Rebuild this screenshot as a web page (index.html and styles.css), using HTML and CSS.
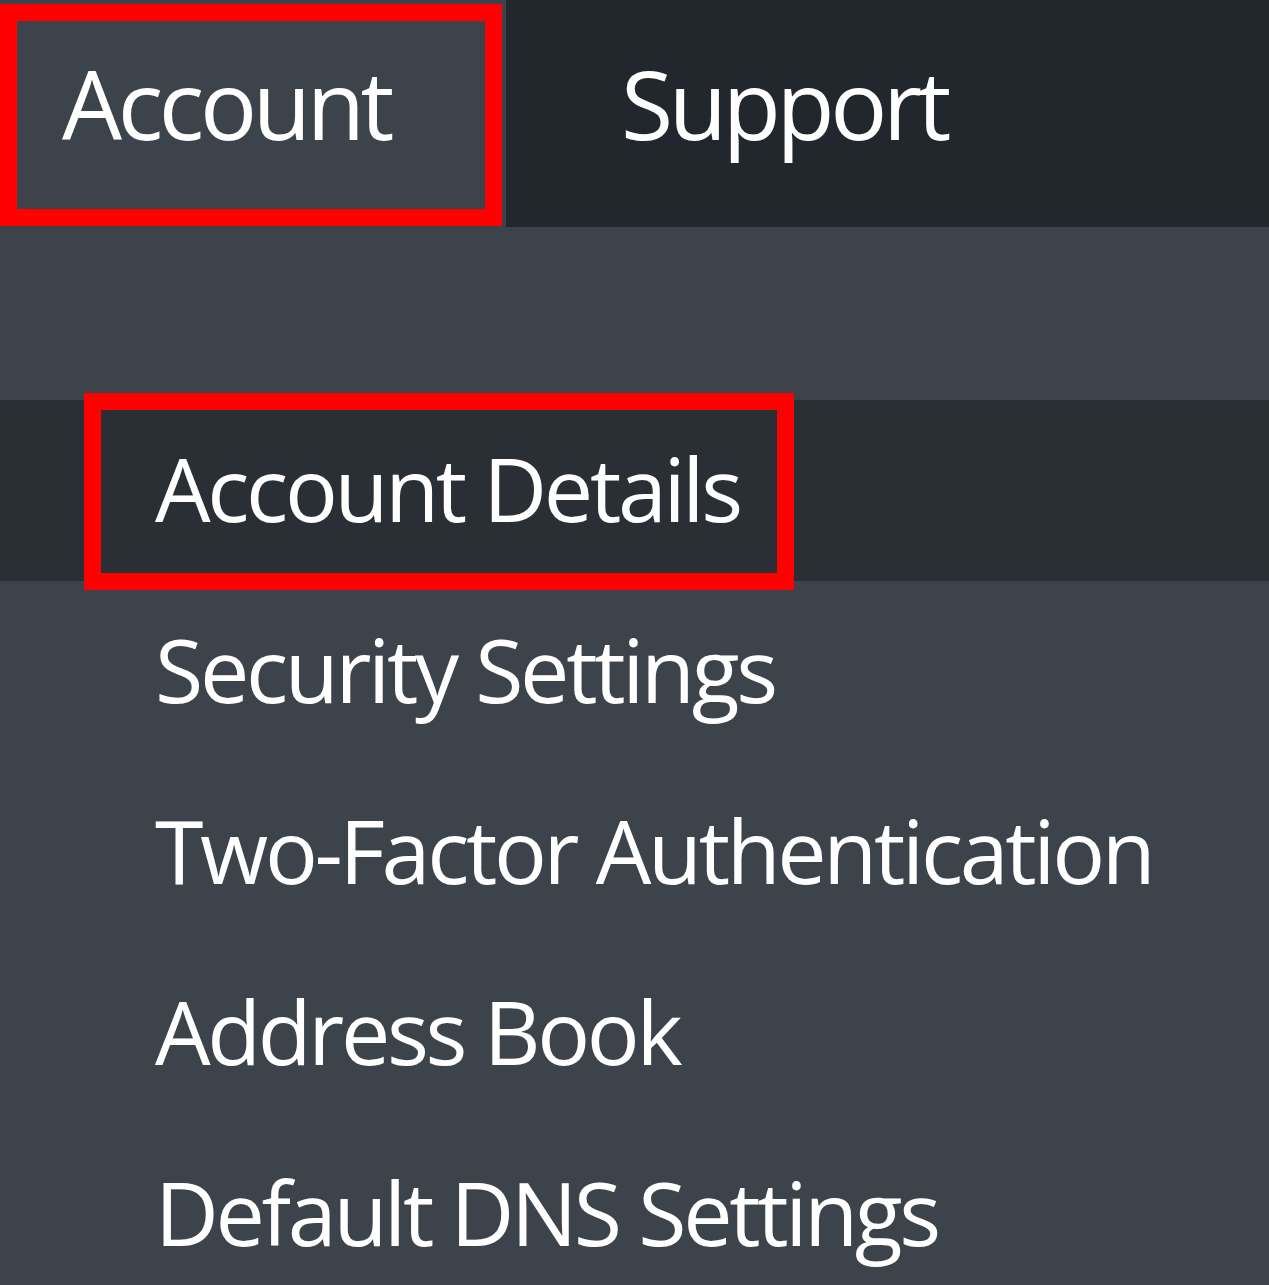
FILE: index.html
```html
<!DOCTYPE html>
<html lang="en">
<head>
    <meta charset="UTF-8">
    <meta name="viewport" content="width=device-width, initial-scale=1.0">
    <title>Account Menu</title>
    <link rel="stylesheet" href="styles.css">
</head>
<body>
    <nav class="top-nav">
        <a href="#" class="nav-tab nav-tab-open marked">Account</a>
        <a href="#" class="nav-tab">Support</a>
    </nav>

    <div class="dropdown">
        <ul class="menu-list">
            <li class="menu-item menu-item-active"><a href="#" class="marked">Account Details</a></li>
            <li class="menu-item"><a href="#">Security Settings</a></li>
            <li class="menu-item"><a href="#">Two-Factor Authentication</a></li>
            <li class="menu-item"><a href="#">Address Book</a></li>
            <li class="menu-item"><a href="#">Default DNS Settings</a></li>
        </ul>
    </div>
</body>
</html>
```

FILE: styles.css
```css
body {
    margin: 0;
    font-family: 'Open Sans', 'Noto Sans', Arial, sans-serif;
    background: #3d434b;
    color: #fff;
    overflow: hidden;
}

a {
    color: #fff;
    text-decoration: none;
}

.top-nav {
    display: flex;
    background: #22272e;
    height: 227px;
}

.nav-tab {
    position: relative;
    display: block;
    font-size: 95px;
    letter-spacing: -0.046em;
    line-height: 207px;
    white-space: nowrap;
    padding: 0 116px 20px 62px;
}

.nav-tab + .nav-tab {
    padding-left: 115px;
}

.nav-tab-open {
    background: #3d434b;
}

.dropdown {
    padding-top: 173px;
}

.menu-list {
    list-style: none;
    margin: 0;
    padding: 0;
}

.menu-item {
    font-size: 88px;
    letter-spacing: -0.038em;
    line-height: 176px;
    white-space: nowrap;
    padding: 0 0 5px 84px;
}

.menu-item a {
    position: relative;
    display: inline-block;
    padding: 0 54px 0 71px;
}

.menu-item-active {
    background: #2a2e35;
}

/* red highlight boxes */
.marked::after {
    content: "";
    position: absolute;
    border: 17px solid #ff0000;
    box-sizing: border-box;
    pointer-events: none;
}

.nav-tab.marked::after {
    top: 4px;
    left: 0;
    right: 4px;
    bottom: 1px;
}

.menu-item a.marked::after {
    top: -7px;
    left: 0;
    right: 0;
    bottom: -14px;
}
```
